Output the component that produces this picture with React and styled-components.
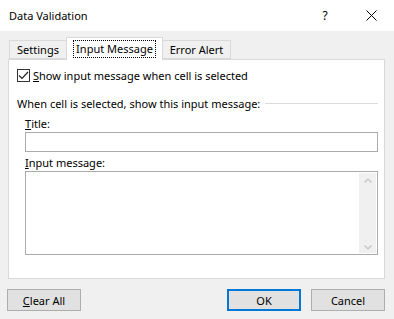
import React from 'react'
import styled, { createGlobalStyle } from 'styled-components'

const GlobalStyle = createGlobalStyle`
  html, body {
    margin: 0;
    padding: 0;
    background: #f0f0f0;
  }
  body {
    font-family: "Noto Sans", "Open Sans", sans-serif;
    font-size: 11px;
    color: #000;
  }
`

const Dialog = styled.div`
  width: 394px;
  height: 319px;
  display: flex;
  flex-direction: column;
  background: #f0f0f0;
  overflow: hidden;
`

const TitleBar = styled.div`
  height: 31px;
  flex-shrink: 0;
  display: flex;
  align-items: center;
  justify-content: space-between;
  background: #fff;
  padding-left: 9px;
  font-size: 11px;
`

const TitleControls = styled.div`
  display: flex;
  height: 100%;
`

const TitleButton = styled.div`
  width: 46px;
  height: 100%;
  display: flex;
  align-items: center;
  justify-content: center;
  font-size: 12px;
`

const Body = styled.div`
  flex: 1;
  display: flex;
  flex-direction: column;
  padding: 6px 9px 0 8px;
`

const TabList = styled.div`
  display: flex;
  align-items: flex-end;
  height: 22px;
  padding-left: 1px;
  position: relative;
  z-index: 1;
`

const Tab = styled.div`
  box-sizing: border-box;
  width: ${p => p.$w}px;
  height: ${p => (p.$active ? 23 : 19)}px;
  display: flex;
  align-items: center;
  justify-content: center;
  border: 1px solid #d9d9d9;
  border-bottom: ${p => (p.$active ? 'none' : '1px solid #d9d9d9')};
  background: ${p => (p.$active ? '#fff' : '#f0f0f0')};
  margin-left: ${p => (p.$overlap ? '-1px' : '0')};
  margin-bottom: ${p => (p.$active ? '-1px' : '0')};
  padding-bottom: ${p => (p.$active ? '1px' : '0')};
`

const FocusText = styled.span`
  outline: 1px dotted #000;
  outline-offset: 0;
  padding: 1px 2px;
  line-height: 14px;
`

const Panel = styled.div`
  box-sizing: border-box;
  height: 220px;
  background: #fff;
  border: 1px solid #d9d9d9;
  padding: 0 8px 0 8px;
  display: flex;
  flex-direction: column;
`

const CheckRow = styled.label`
  display: flex;
  align-items: center;
  margin-top: 9px;
  height: 13px;
  gap: 3px;
`

const CheckBox = styled.span`
  box-sizing: border-box;
  width: 13px;
  height: 13px;
  border: 1px solid #333;
  background: #fff;
  display: flex;
  align-items: center;
  justify-content: center;
`

const GroupHeader = styled.div`
  display: flex;
  align-items: center;
  height: 16px;
  margin-top: 13px;
  gap: 5px;
  white-space: nowrap;
`

const Rule = styled.div`
  flex: 1;
  height: 1px;
  background: #dcdcdc;
  margin-right: -2px;
`

const FieldLabel = styled.div`
  height: 16px;
  display: flex;
  align-items: center;
  margin: ${p => p.$top}px 0 1px 8px;
`

const TextBox = styled.div`
  box-sizing: border-box;
  margin-left: 8px;
  width: 353px;
  height: ${p => p.$h}px;
  border: 1px solid #ababab;
  background: #fff;
  display: flex;
  justify-content: flex-end;
  padding: 1px;
`

const ScrollTrack = styled.div`
  width: 17px;
  background: #f0f0f0;
  display: flex;
  flex-direction: column;
  justify-content: space-between;
  align-items: center;
  padding: 5px 0 3px;
`

const Footer = styled.div`
  display: flex;
  align-items: center;
  margin-top: 10px;
  margin-left: -1px;
`

const Button = styled.div`
  box-sizing: border-box;
  width: ${p => p.$w || 74}px;
  height: 22px;
  display: flex;
  align-items: center;
  justify-content: center;
  background: #e1e1e1;
  border: ${p => (p.$primary ? '2px solid #0078d7' : '1px solid #adadad')};
  margin-left: ${p => p.$ml || 0}px;
`

const Spacer = styled.div`
  flex: 1;
`

const Chevron = ({ up }) => (
  <svg width="8" height="5" viewBox="0 0 8 5">
    <polyline
      points={up ? '0.5,4.5 4,1 7.5,4.5' : '0.5,0.5 4,4 7.5,0.5'}
      fill="none"
      stroke="#c2c2c2"
      strokeWidth="1.2"
    />
  </svg>
)

export default function App() {
  return (
    <Dialog>
      <GlobalStyle />
      <TitleBar>
        <span>Data Validation</span>
        <TitleControls>
          <TitleButton>?</TitleButton>
          <TitleButton>
            <svg width="11" height="11" viewBox="0 0 11 11">
              <path d="M0.5 0.5 L10.5 10.5 M10.5 0.5 L0.5 10.5" stroke="#000" strokeWidth="1" />
            </svg>
          </TitleButton>
        </TitleControls>
      </TitleBar>
      <Body>
        <TabList>
          <Tab $w={58}>Settings</Tab>
          <Tab $w={97} $active $overlap>
            <FocusText>Input Message</FocusText>
          </Tab>
          <Tab $w={69} $overlap>Error Alert</Tab>
        </TabList>
        <Panel>
          <CheckRow>
            <CheckBox>
              <svg width="11" height="11" viewBox="0 0 11 11">
                <polyline points="1,5.5 4,8.5 10,2" fill="none" stroke="#222" strokeWidth="1.2" />
              </svg>
            </CheckBox>
            <span>
              <u>S</u>how input message when cell is selected
            </span>
          </CheckRow>
          <GroupHeader>
            <span>When cell is selected, show this input message:</span>
            <Rule />
          </GroupHeader>
          <FieldLabel $top={4}>
            <span>
              <u>T</u>itle:
            </span>
          </FieldLabel>
          <TextBox $h={20} />
          <FieldLabel $top={2}>
            <span>
              <u>I</u>nput message:
            </span>
          </FieldLabel>
          <TextBox $h={84}>
            <ScrollTrack>
              <Chevron up />
              <Chevron />
            </ScrollTrack>
          </TextBox>
        </Panel>
        <Footer>
          <Button $w={74}>
            <span>
              <u>C</u>lear All
            </span>
          </Button>
          <Spacer />
          <Button $primary>OK</Button>
          <Button $ml={10}>Cancel</Button>
        </Footer>
      </Body>
    </Dialog>
  )
}
